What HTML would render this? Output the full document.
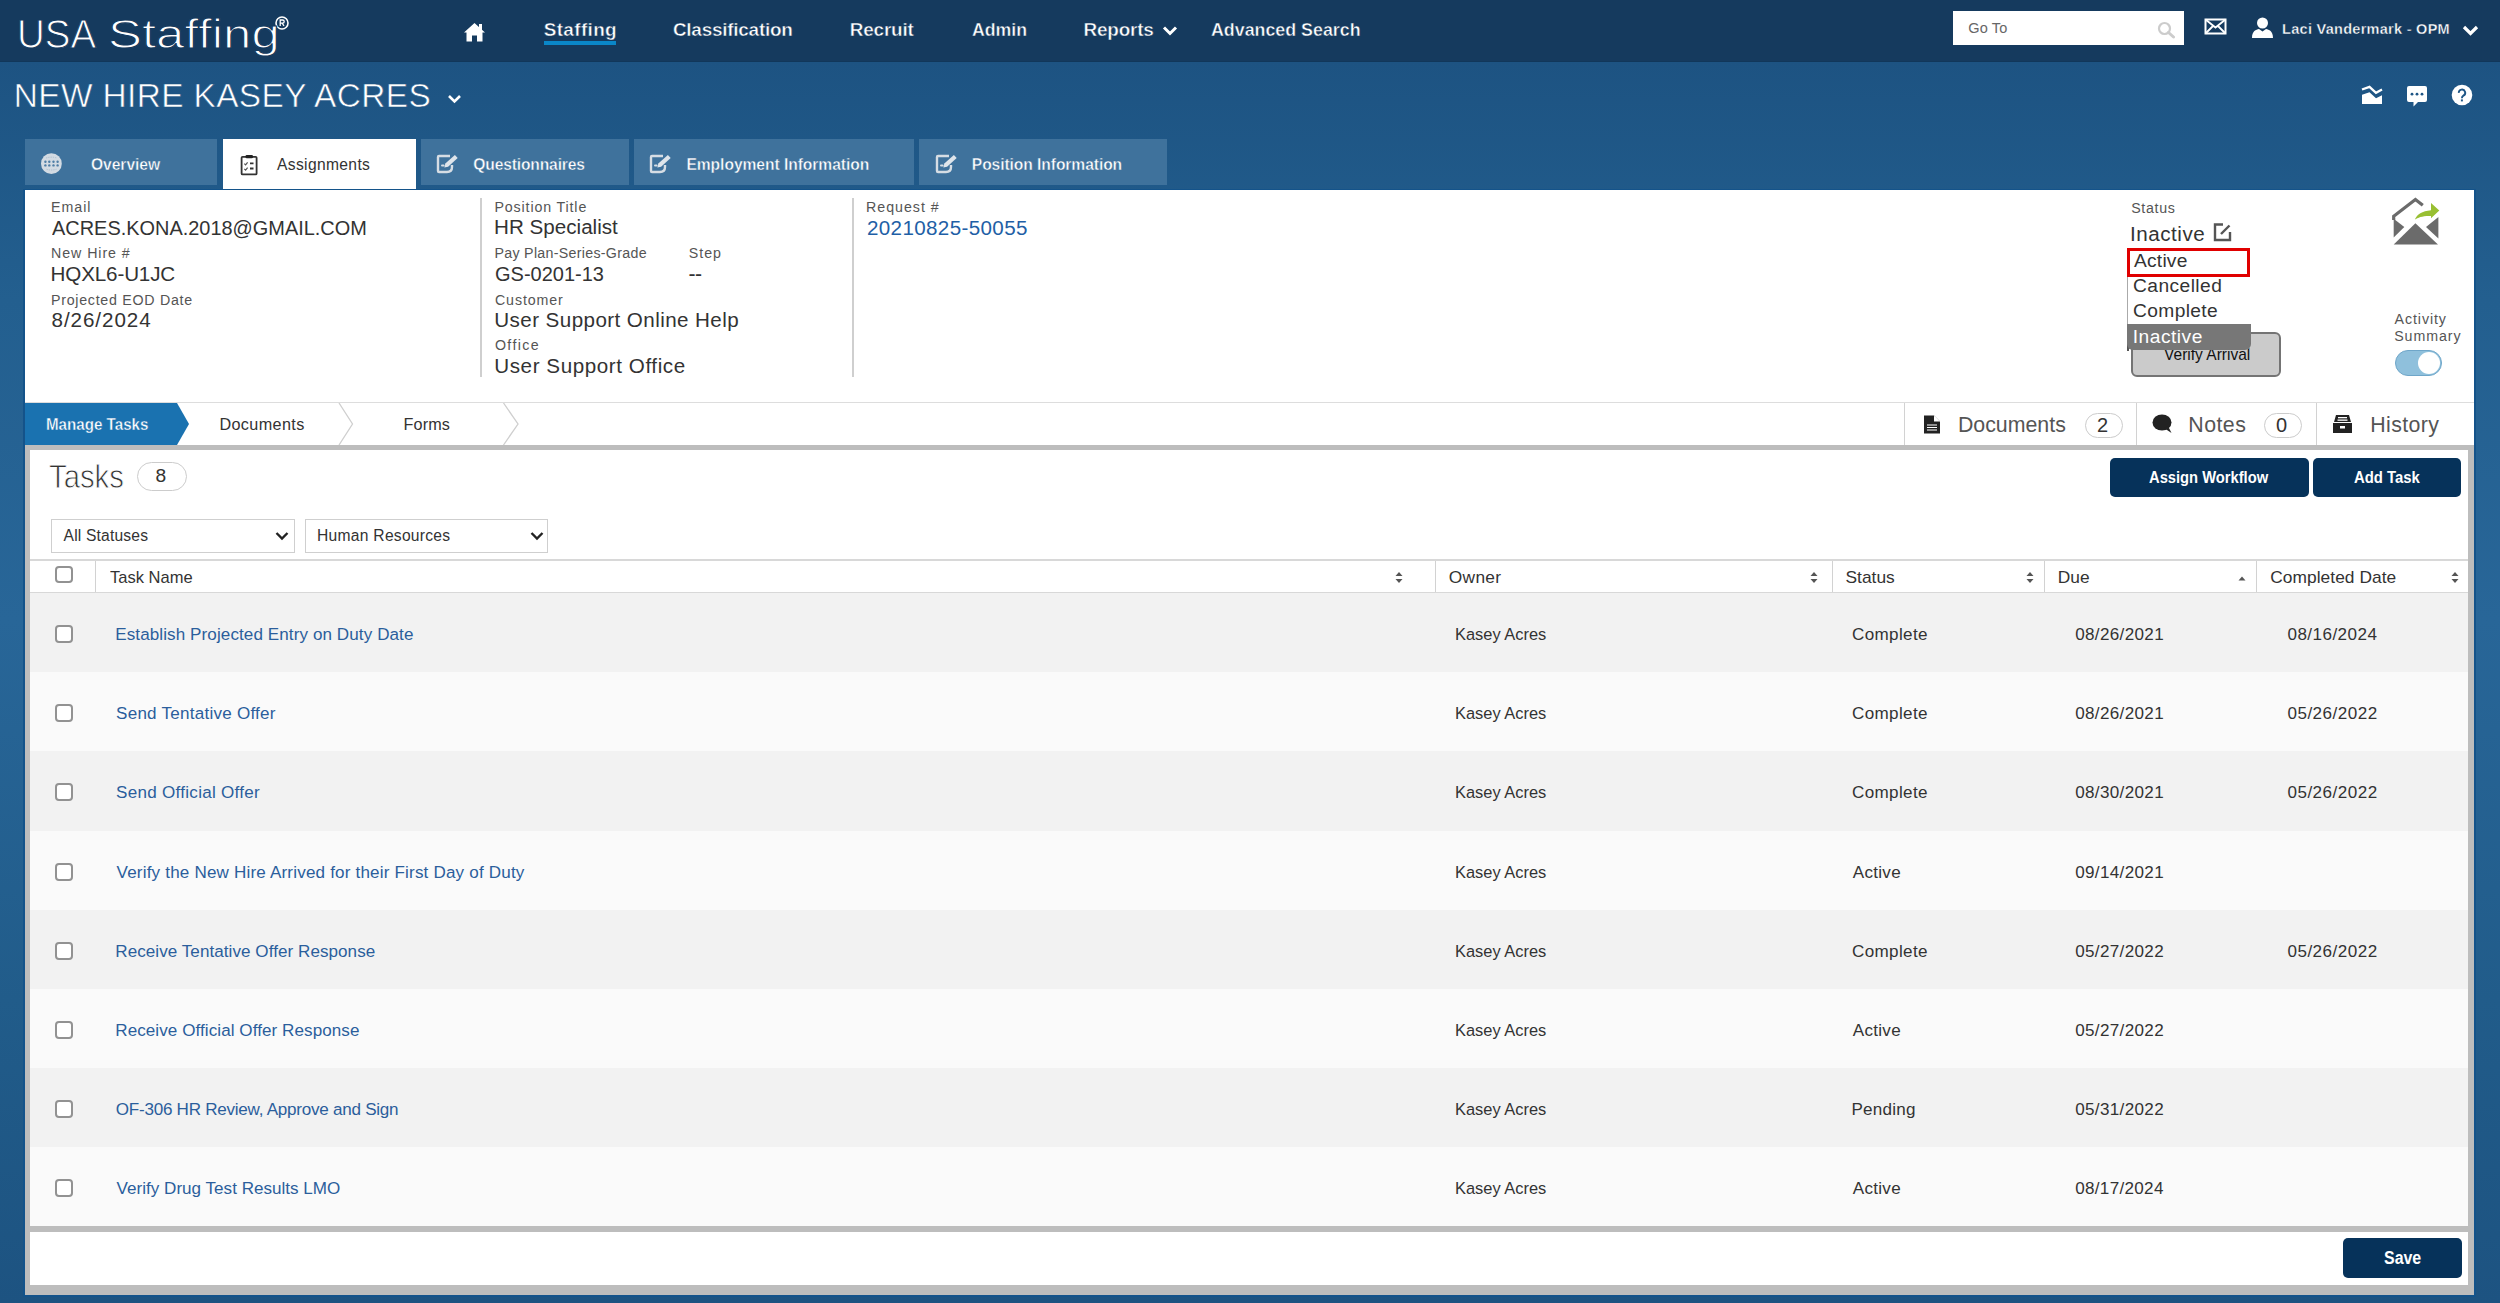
<!DOCTYPE html>
<html><head><meta charset="utf-8"><title>USA Staffing - New Hire</title>
<style>
*{box-sizing:border-box;}
html,body{margin:0;padding:0;}
body{width:2500px;height:1303px;overflow:hidden;position:relative;font-family:"Liberation Sans",sans-serif;
 background:linear-gradient(180deg,#1d5382 62px,#235f8f 300px,#286698 620px,#215c8a 1000px,#1d5381 1303px);}
.tx{position:absolute;white-space:pre;line-height:1;}
.bm{display:inline-block;width:0;height:0;vertical-align:baseline;}
.abs{position:absolute;}
#topbar{position:absolute;left:0;top:0;width:2500px;height:62px;background:#153a5e;}
.tab{position:absolute;top:139px;height:46px;background:#3f729c;}
.tab.active{background:#fff;height:51px;}
#info{position:absolute;left:25px;top:190px;width:2449px;height:212px;background:#fff;}
#crumb{position:absolute;left:25px;top:402px;width:2449px;height:43px;background:#fff;border-top:1px solid #ddd;}
#tasks{position:absolute;left:25px;top:445px;width:2449px;height:850px;background:#bdbdbd;}
#tasksin{position:absolute;left:5px;top:5px;width:2438px;height:776px;background:#fff;overflow:hidden;}
#footer{position:absolute;left:5px;top:787px;width:2438px;height:53px;background:#fff;}
.row{position:absolute;left:0;width:2438px;}
.cb{position:absolute;width:17.8px;height:17.5px;border:2px solid #929292;border-radius:4px;background:#fff;}
.btn{position:absolute;background:#06325a;border-radius:5px;}
.pill{position:absolute;border:1.5px solid #ccc;border-radius:14px;background:#fff;}
.vline{position:absolute;width:1px;background:#d2d2d2;}
.hline{position:absolute;height:1px;background:#d2d2d2;}
</style></head><body>
<div id="topbar"></div><div class="abs" style="left:0;top:61px;width:2500px;height:1px;background:#11375a"></div>
<!-- home icon -->
<svg class="abs" style="left:463px;top:22px" width="23" height="20" viewBox="0 0 23 20"><path d="M11.5 1 L1 10.5 L3.5 10.5 L3.5 19.5 L9 19.5 L9 13.5 L14 13.5 L14 19.5 L19.5 19.5 L19.5 10.5 L22 10.5 Z" fill="#fff"/><rect x="16" y="2" width="3" height="6" fill="#fff"/></svg>
<div class="abs" style="left:544px;top:41px;width:72px;height:4px;background:#0a87c9"></div>
<!-- reports chevron -->
<svg class="abs" style="left:1162px;top:25px" width="16" height="12" viewBox="0 0 16 12"><path d="M2 2.5 L8 8.5 L14 2.5" stroke="#fff" stroke-width="3" fill="none"/></svg>
<!-- registered mark -->
<svg class="abs" style="left:274px;top:15px" width="16" height="16" viewBox="0 0 16 16"><circle cx="8" cy="8" r="6" stroke="#fff" stroke-width="1.6" fill="none"/><path d="M6.2 11 V5 H8.6 A1.6 1.6 0 0 1 8.6 8.2 H6.2 M8.2 8.2 L10 11" stroke="#fff" stroke-width="1.3" fill="none"/></svg>
<!-- goto box -->
<div class="abs" style="left:1953px;top:11px;width:231px;height:34px;background:#fff"></div>
<svg class="abs" style="left:2156px;top:21px" width="22" height="18" viewBox="0 0 22 18"><circle cx="8.5" cy="7.5" r="5.5" stroke="#ccc" stroke-width="2.2" fill="none"/><path d="M12.5 11.5 L17.5 16" stroke="#ccc" stroke-width="3" stroke-linecap="round"/></svg>
<!-- mail -->
<svg class="abs" style="left:2204px;top:18px" width="24" height="18" viewBox="0 0 24 18"><rect x="1.5" y="1.5" width="20" height="14" stroke="#fff" stroke-width="2" fill="none"/><path d="M1.5 1.5 L11.5 9.5 L21.5 1.5 M1.5 15.5 L9 8 M21.5 15.5 L14 8" stroke="#fff" stroke-width="1.8" fill="none"/></svg>
<!-- user -->
<svg class="abs" style="left:2251px;top:16px" width="23" height="23" viewBox="0 0 23 23"><circle cx="11.5" cy="7" r="5.5" fill="#fff"/><path d="M1 22 C1 15 5 13.5 8 13 L11.5 15.5 L15 13 C18 13.5 22 15 22 22 Z" fill="#fff"/></svg>
<svg class="abs" style="left:2461px;top:23px" width="19" height="15" viewBox="0 0 19 15"><path d="M3 4 L9.5 10.5 L16 4" stroke="#fff" stroke-width="3.2" fill="none"/></svg>
<!-- title chevron -->
<svg class="abs" style="left:446px;top:92px" width="17" height="14" viewBox="0 0 17 14"><path d="M3 4 L8.5 9.5 L14 4" stroke="#fff" stroke-width="2.6" fill="none"/></svg>
<!-- right header icons -->
<svg class="abs" style="left:2360px;top:85px" width="24" height="21" viewBox="0 0 24 21"><path d="M2 19 V9.8 L9.5 7.2 L16 13.2 L22 10.2 V19 Z" fill="#fff"/><path d="M2 4.5 L9.5 1.8 L16 7.8 L22 4.6" stroke="#fff" stroke-width="2.3" fill="none"/></svg>
<svg class="abs" style="left:2406px;top:85px" width="22" height="23" viewBox="0 0 22 23"><path d="M3 1 H19 A2 2 0 0 1 21 3 V15 A2 2 0 0 1 19 17 H12 L7.5 21.5 V17 H3 A2 2 0 0 1 1 15 V3 A2 2 0 0 1 3 1 Z" fill="#fff"/><circle cx="6" cy="9.2" r="1.4" fill="#1f5686"/><circle cx="11" cy="9.2" r="1.4" fill="#1f5686"/><circle cx="16" cy="9.2" r="1.4" fill="#1f5686"/></svg>
<svg class="abs" style="left:2451px;top:84px" width="22" height="22" viewBox="0 0 22 22"><circle cx="11" cy="11" r="10.3" fill="#fff"/><path d="M7.8 8.9 A3.2 3.2 0 1 1 12.4 11.6 C11.2 12.3 10.9 12.8 10.9 14.3" stroke="#1f5686" stroke-width="1.9" fill="none"/><rect x="9.9" y="15.4" width="2" height="2" fill="#1f5686"/></svg>

<!-- tabs -->
<div class="tab" style="left:25px;width:192px"></div>
<div class="tab active" style="left:223px;width:193px"></div>
<div class="tab" style="left:421px;width:208px"></div>
<div class="tab" style="left:634px;width:280px"></div>
<div class="tab" style="left:919px;width:248px"></div>
<!-- globe -->
<svg class="abs" style="left:40px;top:152px" width="23" height="23" viewBox="0 0 23 23"><circle cx="11.4" cy="11.7" r="10.4" fill="#d3dbe3"/><g fill="#4f7ea6"><circle cx="5.4" cy="9.8" r="1.2"/><circle cx="9.3" cy="9.8" r="1.2"/><circle cx="13.5" cy="9.8" r="1.2"/><circle cx="17.6" cy="9.8" r="1.2"/><circle cx="5.4" cy="13.4" r="1.2"/><circle cx="9.3" cy="13.4" r="1.2"/><circle cx="13.5" cy="13.4" r="1.2"/><circle cx="17.6" cy="13.4" r="1.2"/></g><g stroke="#a9bccd" stroke-width="0.9" fill="none" stroke-dasharray="1.3 1"><path d="M6 6 Q11.4 4.3 17 6"/><path d="M6.5 17.2 Q11.4 18.8 16.5 17.2"/></g></svg>
<!-- clipboard -->
<svg class="abs" style="left:240px;top:154px" width="19" height="22" viewBox="0 0 19 22"><rect x="1.6" y="2.8" width="15" height="17.6" stroke="#333" stroke-width="1.8" fill="none" rx="1"/><rect x="5.5" y="1" width="7.5" height="3.2" fill="#222" rx="1.3"/><path d="M4.3 9.6 L5.6 10.9 L7.6 8.4 M4.3 14.8 L5.6 16.1 L7.6 13.6" stroke="#555" stroke-width="1.2" fill="none"/><path d="M10 9.3 H13.5 M10 14.5 H13.5" stroke="#333" stroke-width="1.8"/></svg>
<!-- edit icons in tabs -->
<svg class="abs" style="left:436px;top:153px" width="22" height="22" viewBox="0 0 22 22"><path d="M14 3 H3 A1 1 0 0 0 2 4 V18 A1 1 0 0 0 3 19 H11 Q16 19 16 14 V12" stroke="#d6dde4" stroke-width="2.4" fill="none"/><path d="M8.3 14.4 L9.3 10.6 L18.9 1.9 L21.7 5.1 L12.1 13.8 Z" fill="#dfe5eb"/><rect x="5" y="11.6" width="3.6" height="2" rx="1" fill="#d6dde4"/></svg>
<svg class="abs" style="left:649px;top:153px" width="22" height="22" viewBox="0 0 22 22"><path d="M14 3 H3 A1 1 0 0 0 2 4 V18 A1 1 0 0 0 3 19 H11 Q16 19 16 14 V12" stroke="#d6dde4" stroke-width="2.4" fill="none"/><path d="M8.3 14.4 L9.3 10.6 L18.9 1.9 L21.7 5.1 L12.1 13.8 Z" fill="#dfe5eb"/><rect x="5" y="11.6" width="3.6" height="2" rx="1" fill="#d6dde4"/></svg>
<svg class="abs" style="left:935px;top:153px" width="22" height="22" viewBox="0 0 22 22"><path d="M14 3 H3 A1 1 0 0 0 2 4 V18 A1 1 0 0 0 3 19 H11 Q16 19 16 14 V12" stroke="#d6dde4" stroke-width="2.4" fill="none"/><path d="M8.3 14.4 L9.3 10.6 L18.9 1.9 L21.7 5.1 L12.1 13.8 Z" fill="#dfe5eb"/><rect x="5" y="11.6" width="3.6" height="2" rx="1" fill="#d6dde4"/></svg>

<!-- info panel -->
<div class="abs" style="left:23px;top:189px;width:2453px;height:1108px;background:#14538a"></div>
<div id="info"></div>
<div class="vline" style="left:480px;top:198px;height:179px;background:#cfcfcf;width:2px"></div>
<div class="vline" style="left:852px;top:198px;height:179px;background:#cfcfcf;width:2px"></div>
<!-- status edit icon -->
<svg class="abs" style="left:2213px;top:222px" width="20" height="20" viewBox="0 0 20 20"><path d="M10 2.5 H2 V18 H17 V10" stroke="#555" stroke-width="2.4" fill="none"/><path d="M8 12 L16.5 3.5" stroke="#555" stroke-width="2.4"/></svg>
<!-- envelope icon -->
<svg class="abs" style="left:2392px;top:197px" width="50" height="50" viewBox="0 0 50 50"><path d="M1.7 23 V19.3 L23.4 2.5 L30.8 8.3" stroke="#6b6b6b" stroke-width="3.2" fill="none"/><path d="M1.7 21.7 L12.3 30 L1.7 40.6 Z" fill="#6b6b6b"/><path d="M46.4 19.9 L34 30 L46.4 41.5 Z" fill="#6b6b6b"/><path d="M1.7 47.5 L23.4 26.3 L46 47.5 Z" fill="#6b6b6b"/><path d="M22.9 22.6 C25 17.5 30 14 39 13.3 V6 L47.3 13.4 L39 21.2 V19 C31 18.6 26 20.5 22.9 22.6 Z" fill="#98bf32"/></svg>
<!-- toggle -->
<div class="abs" style="left:2395px;top:350px;width:47px;height:26px;border-radius:13px;background:#8fc0dc;border:1.5px solid #6fa6c9"></div>
<div class="abs" style="left:2418px;top:352px;width:22px;height:22px;border-radius:11px;background:#fff"></div>
<!-- verify arrival button -->
<div class="abs" style="left:2131px;top:332px;width:150px;height:45px;background:#cbcbcb;border:2px solid #747474;border-radius:6px"></div>
<!-- dropdown list -->
<div class="abs" style="left:2127px;top:277px;width:124px;height:48px;background:#fff;border-left:1px solid #aaa;z-index:4"></div>
<div class="abs" style="left:2127px;top:324px;width:2px;height:27px;background:#555;z-index:4"></div>
<div class="abs" style="left:2127px;top:324px;width:124px;height:26px;background:#777;border-radius:0 0 6px 6px;z-index:4"></div>
<div class="abs" style="left:2127px;top:248px;width:123px;height:29px;border:3px solid #e00000;background:#fff;z-index:4"></div>

<!-- breadcrumb -->
<div id="crumb"></div>
<svg class="abs" style="left:25px;top:403px" width="500" height="42" viewBox="0 0 500 42"><path d="M0 0 H152 L164 21 L152 42 H0 Z" fill="#1a72b0"/><path d="M314 0 L327.5 21 L314 42" stroke="#cfcfcf" stroke-width="1.3" fill="none"/><path d="M478.5 0 L493 21 L478.5 42" stroke="#cfcfcf" stroke-width="1.3" fill="none"/></svg>
<div class="vline" style="left:1904px;top:403px;height:42px"></div>
<div class="vline" style="left:2136px;top:403px;height:42px"></div>
<div class="vline" style="left:2316px;top:403px;height:42px"></div>
<!-- doc icon -->
<svg class="abs" style="left:1923px;top:415px" width="18" height="19" viewBox="0 0 18 19"><path d="M1 0.5 H11 L17 6.5 V18.5 H1 Z" fill="#222"/><path d="M11 0.5 V6.5 H17" fill="#fff"/><path d="M11.8 1.5 L16 5.8 H11.8 Z" fill="#fff"/><path d="M4 10 H14 M4 12.5 H14 M4 15 H14" stroke="#fff" stroke-width="1.2"/></svg>
<svg class="abs" style="left:2152px;top:413px" width="21" height="21" viewBox="0 0 21 21"><ellipse cx="10" cy="9.5" rx="9.5" ry="8" fill="#222"/><path d="M12 15 L19.5 20 L16 13 Z" fill="#222"/></svg>
<svg class="abs" style="left:2332px;top:414px" width="21" height="20" viewBox="0 0 21 20"><path d="M4 1 H17 L19 8 H2 Z" fill="#222"/><rect x="6" y="3" width="9" height="1.3" fill="#fff"/><rect x="5.5" y="5.5" width="10" height="1.3" fill="#fff"/><rect x="1" y="9" width="19" height="10" fill="#222"/><rect x="8" y="12" width="5" height="2.5" fill="#fff"/></svg>
<div class="pill" style="left:2085px;top:413px;width:38px;height:25px"></div>
<div class="pill" style="left:2264px;top:413px;width:38px;height:25px"></div>
<div class="tx" style="left:2097px;top:413px;font-size:20px;line-height:25px;color:#333">2</div>
<div class="tx" style="left:2276px;top:413px;font-size:20px;line-height:25px;color:#333">0</div>

<!-- tasks panel -->
<div id="tasks">
 <div id="tasksin">
  <div class="pill" style="left:107px;top:12px;width:50px;height:29px;border-radius:15px"></div>
  <div class="abs" style="left:20.5px;top:68.5px;width:244px;height:34px;border:1.5px solid #cfcfcf"></div>
  <div class="abs" style="left:275px;top:68.5px;width:243px;height:34px;border:1.5px solid #cfcfcf"></div>
  <svg class="abs" style="left:245px;top:81px" width="14" height="11" viewBox="0 0 14 11"><path d="M1.5 2 L7 7.5 L12.5 2" stroke="#222" stroke-width="2.4" fill="none"/></svg>
  <svg class="abs" style="left:500px;top:81px" width="14" height="11" viewBox="0 0 14 11"><path d="M1.5 2 L7 7.5 L12.5 2" stroke="#222" stroke-width="2.4" fill="none"/></svg>
  <div class="btn" style="left:2080px;top:8px;width:199px;height:39px"></div>
  <div class="btn" style="left:2283px;top:8px;width:148px;height:39px"></div>
  <!-- table header -->
  <div class="hline" style="left:0;top:109px;width:2438px;height:2px;background:#d8d8d8"></div>
  <div class="hline" style="left:0;top:142px;width:2438px;height:2px;background:#d8d8d8"></div>
  <div class="vline" style="left:65px;top:111px;height:31px"></div>
  <div class="vline" style="left:1405px;top:111px;height:31px"></div>
  <div class="vline" style="left:1802px;top:111px;height:31px"></div>
  <div class="vline" style="left:2014px;top:111px;height:31px"></div>
  <div class="vline" style="left:2226px;top:111px;height:31px"></div>
  <div class="cb" style="left:25.2px;top:115.5px"></div>
  <div class="row" style="top:143px;height:79px;background:#f2f2f2"></div>
<div class="cb" style="left:25.2px;top:175px"></div>
<div class="row" style="top:222px;height:79px;background:#fafafa"></div>
<div class="cb" style="left:25.2px;top:254px"></div>
<div class="row" style="top:301px;height:80px;background:#f2f2f2"></div>
<div class="cb" style="left:25.2px;top:333px"></div>
<div class="row" style="top:381px;height:79px;background:#fafafa"></div>
<div class="cb" style="left:25.2px;top:413px"></div>
<div class="row" style="top:460px;height:79px;background:#f2f2f2"></div>
<div class="cb" style="left:25.2px;top:492px"></div>
<div class="row" style="top:539px;height:79px;background:#fafafa"></div>
<div class="cb" style="left:25.2px;top:571px"></div>
<div class="row" style="top:618px;height:79px;background:#f2f2f2"></div>
<div class="cb" style="left:25.2px;top:650px"></div>
<div class="row" style="top:697px;height:79px;background:#fafafa"></div>
<div class="cb" style="left:25.2px;top:729px"></div>
 </div>
 <div id="footer">
  <div class="btn" style="left:2313px;top:6px;width:119px;height:40px"></div>
 </div>
</div>
<svg class="abs" style="left:1395px;top:571px" width="8" height="13" viewBox="0 0 8 13"><path d="M0.5 5 L4 1 L7.5 5 Z M0.5 8 L4 12 L7.5 8 Z" fill="#555"/></svg>
<svg class="abs" style="left:1810px;top:571px" width="8" height="13" viewBox="0 0 8 13"><path d="M0.5 5 L4 1 L7.5 5 Z M0.5 8 L4 12 L7.5 8 Z" fill="#555"/></svg>
<svg class="abs" style="left:2026px;top:571px" width="8" height="13" viewBox="0 0 8 13"><path d="M0.5 5 L4 1 L7.5 5 Z M0.5 8 L4 12 L7.5 8 Z" fill="#555"/></svg>
<svg class="abs" style="left:2451px;top:571px" width="8" height="13" viewBox="0 0 8 13"><path d="M0.5 5 L4 1 L7.5 5 Z M0.5 8 L4 12 L7.5 8 Z" fill="#555"/></svg>
<svg class="abs" style="left:2238px;top:575px" width="8" height="7" viewBox="0 0 8 7"><path d="M0.5 5.5 L4 1.5 L7.5 5.5 Z" fill="#555"/></svg>
<div class="tx" id="t0" style="left:543.70px;top:21.00px;font-size:18.92px;letter-spacing:0.373px;font-weight:bold;color:#fff;-webkit-text-stroke:0.45px #153a5e">Staffing</div>
<div class="tx" id="t1" style="left:672.91px;top:21.00px;font-size:18.92px;letter-spacing:-0.229px;font-weight:bold;color:#fff;-webkit-text-stroke:0.45px #153a5e">Classification</div>
<div class="tx" id="t2" style="left:849.82px;top:21.00px;font-size:18.92px;letter-spacing:-0.199px;font-weight:bold;color:#fff;-webkit-text-stroke:0.45px #153a5e">Recruit</div>
<div class="tx" id="t3" style="left:971.72px;top:21.00px;font-size:18.92px;letter-spacing:0.000px;font-weight:bold;color:#fff;-webkit-text-stroke:0.45px #153a5e;transform:scaleX(0.9370);transform-origin:0 0;transform:scaleX(0.9370);transform-origin:0 0">Admin</div>
<div class="tx" id="t4" style="left:1083.62px;top:21.00px;font-size:18.92px;letter-spacing:-0.220px;font-weight:bold;color:#fff;-webkit-text-stroke:0.45px #153a5e">Reports</div>
<div class="tx" id="t5" style="left:1211.42px;top:21.00px;font-size:18.92px;letter-spacing:0.000px;font-weight:bold;color:#fff;-webkit-text-stroke:0.45px #153a5e;transform:scaleX(0.9426);transform-origin:0 0;transform:scaleX(0.9426);transform-origin:0 0">Advanced Search</div>
<div class="tx" id="t6" style="left:16.60px;top:13.50px;font-size:41.24px;letter-spacing:0.000px;font-weight:normal;color:#fff;-webkit-text-stroke:1px #153a5e;transform:scaleX(0.9329);transform-origin:0 0;transform:scaleX(0.9329);transform-origin:0 0">USA</div>
<div class="tx" id="t7" style="left:108.41px;top:13.50px;font-size:41.24px;letter-spacing:0.000px;font-weight:normal;color:#fff;-webkit-text-stroke:1.1px #153a5e;transform:scaleX(1.2346);transform-origin:0 0;transform:scaleX(1.2346);transform-origin:0 0">Staffing</div>
<div class="tx" id="t8" style="left:1968.32px;top:21.00px;font-size:14.51px;letter-spacing:0.141px;font-weight:normal;color:#666;">Go To</div>
<div class="tx" id="t9" style="left:2282.09px;top:22.00px;font-size:14.51px;letter-spacing:0.280px;font-weight:bold;color:#fff;-webkit-text-stroke:0.35px #153a5e">Laci Vandermark - OPM</div>
<div class="tx" id="t10" style="left:13.69px;top:78.50px;font-size:33.42px;letter-spacing:0.391px;font-weight:normal;color:#fff;-webkit-text-stroke:0.6px #1f5686">NEW HIRE KASEY ACRES</div>
<div class="tx" id="t11" style="left:90.91px;top:157.30px;font-size:15.64px;letter-spacing:-0.034px;font-weight:bold;color:#fff;-webkit-text-stroke:0.4px #3f729c">Overview</div>
<div class="tx" id="t12" style="left:277.00px;top:157.30px;font-size:15.64px;letter-spacing:0.343px;font-weight:normal;color:#333;">Assignments</div>
<div class="tx" id="t13" style="left:473.31px;top:157.30px;font-size:15.64px;letter-spacing:-0.159px;font-weight:bold;color:#fff;-webkit-text-stroke:0.4px #3f729c">Questionnaires</div>
<div class="tx" id="t14" style="left:686.42px;top:157.30px;font-size:15.64px;letter-spacing:-0.054px;font-weight:bold;color:#fff;-webkit-text-stroke:0.4px #3f729c">Employment Information</div>
<div class="tx" id="t15" style="left:971.82px;top:157.30px;font-size:15.64px;letter-spacing:-0.082px;font-weight:bold;color:#fff;-webkit-text-stroke:0.4px #3f729c">Position Information</div>
<div class="tx" id="t16" style="left:51.09px;top:200.40px;font-size:14.22px;letter-spacing:0.972px;font-weight:normal;color:#555;">Email</div>
<div class="tx" id="t17" style="left:52.20px;top:217.70px;font-size:20.62px;letter-spacing:0.000px;font-weight:normal;color:#333;;transform:scaleX(0.9671);transform-origin:0 0;transform:scaleX(0.9671);transform-origin:0 0">ACRES.KONA.2018@GMAIL.COM</div>
<div class="tx" id="t18" style="left:51.09px;top:246.20px;font-size:14.22px;letter-spacing:0.920px;font-weight:normal;color:#555;">New Hire #</div>
<div class="tx" id="t19" style="left:50.59px;top:264.00px;font-size:20.62px;letter-spacing:-0.148px;font-weight:normal;color:#333;">HQXL6-U1JC</div>
<div class="tx" id="t20" style="left:51.09px;top:292.50px;font-size:14.22px;letter-spacing:0.720px;font-weight:normal;color:#555;">Projected EOD Date</div>
<div class="tx" id="t21" style="left:51.56px;top:310.00px;font-size:20.62px;letter-spacing:0.927px;font-weight:normal;color:#333;">8/26/2024</div>
<div class="tx" id="t22" style="left:494.49px;top:200.40px;font-size:14.22px;letter-spacing:0.861px;font-weight:normal;color:#555;">Position Title</div>
<div class="tx" id="t23" style="left:493.99px;top:217.20px;font-size:20.62px;letter-spacing:0.014px;font-weight:normal;color:#333;">HR Specialist</div>
<div class="tx" id="t24" style="left:494.49px;top:246.20px;font-size:14.22px;letter-spacing:0.293px;font-weight:normal;color:#555;">Pay Plan-Series-Grade</div>
<div class="tx" id="t25" style="left:688.76px;top:246.20px;font-size:14.22px;letter-spacing:0.988px;font-weight:normal;color:#555;">Step</div>
<div class="tx" id="t26" style="left:494.66px;top:263.60px;font-size:20.62px;letter-spacing:0.000px;font-weight:normal;color:#333;;transform:scaleX(0.9698);transform-origin:0 0;transform:scaleX(0.9698);transform-origin:0 0">GS-0201-13</div>
<div class="tx" id="t27" style="left:494.93px;top:292.60px;font-size:14.22px;letter-spacing:0.899px;font-weight:normal;color:#555;">Customer</div>
<div class="tx" id="t28" style="left:494.31px;top:310.00px;font-size:20.62px;letter-spacing:0.415px;font-weight:normal;color:#333;">User Support Online Help</div>
<div class="tx" id="t29" style="left:494.93px;top:338.20px;font-size:14.22px;letter-spacing:1.351px;font-weight:normal;color:#555;">Office</div>
<div class="tx" id="t30" style="left:494.31px;top:355.60px;font-size:20.62px;letter-spacing:0.567px;font-weight:normal;color:#333;">User Support Office</div>
<div class="tx" id="t31" style="left:866.09px;top:200.30px;font-size:14.22px;letter-spacing:0.973px;font-weight:normal;color:#555;">Request #</div>
<div class="tx" id="t32" style="left:866.93px;top:217.60px;font-size:20.62px;letter-spacing:0.357px;font-weight:normal;color:#1f5fa6;">20210825-50055</div>
<div class="tx" id="t33" style="left:2131.16px;top:200.50px;font-size:14.22px;letter-spacing:0.694px;font-weight:normal;color:#555;">Status</div>
<div class="tx" id="t34" style="left:2129.99px;top:224.00px;font-size:20.62px;letter-spacing:0.540px;font-weight:normal;color:#333;">Inactive</div>
<div class="tx" id="t35" style="left:2163.50px;top:345.50px;font-size:17.00px;letter-spacing:0.000px;font-weight:normal;color:#111;;transform:scaleX(0.9132);transform-origin:0 0;transform:scaleX(0.9132);transform-origin:0 0">Verify Arrival</div>
<div class="tx" id="t36" style="left:688.54px;top:262.60px;font-size:21.20px;letter-spacing:-0.691px;font-weight:normal;color:#333;">--</div>
<div class="tx" id="t37" style="left:2134.00px;top:251.20px;font-size:19.20px;letter-spacing:0.219px;font-weight:normal;color:#333;z-index:5">Active</div>
<div class="tx" id="t38" style="left:2133.10px;top:276.00px;font-size:19.20px;letter-spacing:0.424px;font-weight:normal;color:#333;z-index:5">Cancelled</div>
<div class="tx" id="t39" style="left:2133.10px;top:300.80px;font-size:19.20px;letter-spacing:0.358px;font-weight:normal;color:#333;z-index:5">Complete</div>
<div class="tx" id="t40" style="left:2132.80px;top:326.50px;font-size:19.20px;letter-spacing:0.487px;font-weight:normal;color:#fff;z-index:5">Inactive</div>
<div class="tx" id="t41" style="left:2394.60px;top:312.30px;font-size:14.22px;letter-spacing:0.908px;font-weight:normal;color:#555;">Activity</div>
<div class="tx" id="t42" style="left:2394.16px;top:329.20px;font-size:14.22px;letter-spacing:0.933px;font-weight:normal;color:#555;">Summary</div>
<div class="tx" id="t43" style="left:46.05px;top:416.40px;font-size:16.21px;letter-spacing:0.000px;font-weight:bold;color:#fff;-webkit-text-stroke:0.4px #1a72b0;transform:scaleX(0.9355);transform-origin:0 0;transform:scaleX(0.9355);transform-origin:0 0">Manage Tasks</div>
<div class="tx" id="t44" style="left:219.43px;top:416.40px;font-size:16.21px;letter-spacing:0.372px;font-weight:normal;color:#333;">Documents</div>
<div class="tx" id="t45" style="left:403.53px;top:416.40px;font-size:16.21px;letter-spacing:0.135px;font-weight:normal;color:#333;">Forms</div>
<div class="tx" id="t46" style="left:1957.93px;top:414.50px;font-size:21.33px;letter-spacing:0.005px;font-weight:normal;color:#555;">Documents</div>
<div class="tx" id="t47" style="left:2188.33px;top:414.50px;font-size:21.33px;letter-spacing:0.451px;font-weight:normal;color:#555;">Notes</div>
<div class="tx" id="t48" style="left:2370.23px;top:414.50px;font-size:21.33px;letter-spacing:0.399px;font-weight:normal;color:#555;">History</div>
<div class="tx" id="t49" style="left:49.04px;top:458.90px;font-size:34.13px;letter-spacing:0.000px;font-weight:normal;color:#333;-webkit-text-stroke:0.9px #fff;transform:scaleX(0.8581);transform-origin:0 0;transform:scaleX(0.8581);transform-origin:0 0">Tasks</div>
<div class="tx" id="t50" style="left:63.60px;top:527.70px;font-size:15.64px;letter-spacing:0.171px;font-weight:normal;color:#333;">All Statuses</div>
<div class="tx" id="t51" style="left:317.08px;top:527.70px;font-size:15.64px;letter-spacing:0.261px;font-weight:normal;color:#333;">Human Resources</div>
<div class="tx" id="t52" style="left:110.04px;top:569.00px;font-size:17.35px;letter-spacing:0.000px;font-weight:normal;color:#333;;transform:scaleX(0.9521);transform-origin:0 0;transform:scaleX(0.9521);transform-origin:0 0">Task Name</div>
<div class="tx" id="t53" style="left:1448.79px;top:569.00px;font-size:17.35px;letter-spacing:0.298px;font-weight:normal;color:#333;">Owner</div>
<div class="tx" id="t54" style="left:1845.46px;top:569.00px;font-size:17.35px;letter-spacing:0.019px;font-weight:normal;color:#333;">Status</div>
<div class="tx" id="t55" style="left:2057.64px;top:569.00px;font-size:17.35px;letter-spacing:0.114px;font-weight:normal;color:#333;">Due</div>
<div class="tx" id="t56" style="left:2270.19px;top:569.00px;font-size:17.35px;letter-spacing:0.057px;font-weight:normal;color:#333;">Completed Date</div>
<div class="tx" id="t57" style="left:155.40px;top:466.40px;font-size:19.20px;letter-spacing:0.000px;font-weight:normal;color:#333;">8</div>
<div class="tx" id="t58" style="left:2149.27px;top:469.80px;font-size:16.92px;letter-spacing:0.000px;font-weight:bold;color:#fff;;transform:scaleX(0.8708);transform-origin:0 0;transform:scaleX(0.8708);transform-origin:0 0">Assign Workflow</div>
<div class="tx" id="t59" style="left:2354.17px;top:469.80px;font-size:16.92px;letter-spacing:0.000px;font-weight:bold;color:#fff;;transform:scaleX(0.8801);transform-origin:0 0;transform:scaleX(0.8801);transform-origin:0 0">Add Task</div>
<div class="tx" id="t60" style="left:2384.15px;top:1250.00px;font-size:17.64px;letter-spacing:0.000px;font-weight:bold;color:#fff;;transform:scaleX(0.9043);transform-origin:0 0;transform:scaleX(0.9043);transform-origin:0 0">Save</div>
<div class="tx" id="t61" style="left:115.27px;top:625.50px;font-size:17.07px;letter-spacing:0.087px;font-weight:normal;color:#2b5e9c;">Establish Projected Entry on Duty Date</div>
<div class="tx" id="t62" style="left:1454.72px;top:625.50px;font-size:17.07px;letter-spacing:0.000px;font-weight:normal;color:#333;;transform:scaleX(0.9624);transform-origin:0 0;transform:scaleX(0.9624);transform-origin:0 0">Kasey Acres</div>
<div class="tx" id="t63" style="left:1852.00px;top:625.50px;font-size:17.07px;letter-spacing:0.350px;font-weight:normal;color:#333;">Complete</div>
<div class="tx" id="t64" style="left:2075.17px;top:625.50px;font-size:17.07px;letter-spacing:0.345px;font-weight:normal;color:#333;">08/26/2021</div>
<div class="tx" id="t65" style="left:2287.47px;top:625.50px;font-size:17.07px;letter-spacing:0.449px;font-weight:normal;color:#333;">08/16/2024</div>
<div class="tx" id="t66" style="left:116.07px;top:704.50px;font-size:17.07px;letter-spacing:0.234px;font-weight:normal;color:#2b5e9c;">Send Tentative Offer</div>
<div class="tx" id="t67" style="left:1454.72px;top:704.50px;font-size:17.07px;letter-spacing:0.000px;font-weight:normal;color:#333;;transform:scaleX(0.9624);transform-origin:0 0;transform:scaleX(0.9624);transform-origin:0 0">Kasey Acres</div>
<div class="tx" id="t68" style="left:1852.00px;top:704.50px;font-size:17.07px;letter-spacing:0.350px;font-weight:normal;color:#333;">Complete</div>
<div class="tx" id="t69" style="left:2075.17px;top:704.50px;font-size:17.07px;letter-spacing:0.345px;font-weight:normal;color:#333;">08/26/2021</div>
<div class="tx" id="t70" style="left:2287.47px;top:704.50px;font-size:17.07px;letter-spacing:0.479px;font-weight:normal;color:#333;">05/26/2022</div>
<div class="tx" id="t71" style="left:116.07px;top:783.50px;font-size:17.07px;letter-spacing:0.272px;font-weight:normal;color:#2b5e9c;">Send Official Offer</div>
<div class="tx" id="t72" style="left:1454.72px;top:783.50px;font-size:17.07px;letter-spacing:0.000px;font-weight:normal;color:#333;;transform:scaleX(0.9624);transform-origin:0 0;transform:scaleX(0.9624);transform-origin:0 0">Kasey Acres</div>
<div class="tx" id="t73" style="left:1852.00px;top:783.50px;font-size:17.07px;letter-spacing:0.350px;font-weight:normal;color:#333;">Complete</div>
<div class="tx" id="t74" style="left:2075.17px;top:783.50px;font-size:17.07px;letter-spacing:0.345px;font-weight:normal;color:#333;">08/30/2021</div>
<div class="tx" id="t75" style="left:2287.47px;top:783.50px;font-size:17.07px;letter-spacing:0.479px;font-weight:normal;color:#333;">05/26/2022</div>
<div class="tx" id="t76" style="left:116.60px;top:863.50px;font-size:17.07px;letter-spacing:0.176px;font-weight:normal;color:#2b5e9c;">Verify the New Hire Arrived for their First Day of Duty</div>
<div class="tx" id="t77" style="left:1454.72px;top:863.50px;font-size:17.07px;letter-spacing:0.000px;font-weight:normal;color:#333;;transform:scaleX(0.9624);transform-origin:0 0;transform:scaleX(0.9624);transform-origin:0 0">Kasey Acres</div>
<div class="tx" id="t78" style="left:1852.80px;top:863.50px;font-size:17.07px;letter-spacing:0.283px;font-weight:normal;color:#333;">Active</div>
<div class="tx" id="t79" style="left:2075.17px;top:863.50px;font-size:17.07px;letter-spacing:0.345px;font-weight:normal;color:#333;">09/14/2021</div>
<div class="tx" id="t80" style="left:115.27px;top:942.50px;font-size:17.07px;letter-spacing:0.053px;font-weight:normal;color:#2b5e9c;">Receive Tentative Offer Response</div>
<div class="tx" id="t81" style="left:1454.72px;top:942.50px;font-size:17.07px;letter-spacing:0.000px;font-weight:normal;color:#333;;transform:scaleX(0.9624);transform-origin:0 0;transform:scaleX(0.9624);transform-origin:0 0">Kasey Acres</div>
<div class="tx" id="t82" style="left:1852.00px;top:942.50px;font-size:17.07px;letter-spacing:0.350px;font-weight:normal;color:#333;">Complete</div>
<div class="tx" id="t83" style="left:2075.17px;top:942.50px;font-size:17.07px;letter-spacing:0.345px;font-weight:normal;color:#333;">05/27/2022</div>
<div class="tx" id="t84" style="left:2287.47px;top:942.50px;font-size:17.07px;letter-spacing:0.479px;font-weight:normal;color:#333;">05/26/2022</div>
<div class="tx" id="t85" style="left:115.27px;top:1021.50px;font-size:17.07px;letter-spacing:0.067px;font-weight:normal;color:#2b5e9c;">Receive Official Offer Response</div>
<div class="tx" id="t86" style="left:1454.72px;top:1021.50px;font-size:17.07px;letter-spacing:0.000px;font-weight:normal;color:#333;;transform:scaleX(0.9624);transform-origin:0 0;transform:scaleX(0.9624);transform-origin:0 0">Kasey Acres</div>
<div class="tx" id="t87" style="left:1852.80px;top:1021.50px;font-size:17.07px;letter-spacing:0.283px;font-weight:normal;color:#333;">Active</div>
<div class="tx" id="t88" style="left:2075.17px;top:1021.50px;font-size:17.07px;letter-spacing:0.345px;font-weight:normal;color:#333;">05/27/2022</div>
<div class="tx" id="t89" style="left:115.80px;top:1100.50px;font-size:17.07px;letter-spacing:-0.255px;font-weight:normal;color:#2b5e9c;">OF-306 HR Review, Approve and Sign</div>
<div class="tx" id="t90" style="left:1454.72px;top:1100.50px;font-size:17.07px;letter-spacing:0.000px;font-weight:normal;color:#333;;transform:scaleX(0.9624);transform-origin:0 0;transform:scaleX(0.9624);transform-origin:0 0">Kasey Acres</div>
<div class="tx" id="t91" style="left:1851.47px;top:1100.50px;font-size:17.07px;letter-spacing:0.226px;font-weight:normal;color:#333;">Pending</div>
<div class="tx" id="t92" style="left:2075.17px;top:1100.50px;font-size:17.07px;letter-spacing:0.345px;font-weight:normal;color:#333;">05/31/2022</div>
<div class="tx" id="t93" style="left:116.60px;top:1179.50px;font-size:17.07px;letter-spacing:0.011px;font-weight:normal;color:#2b5e9c;">Verify Drug Test Results LMO</div>
<div class="tx" id="t94" style="left:1454.72px;top:1179.50px;font-size:17.07px;letter-spacing:0.000px;font-weight:normal;color:#333;;transform:scaleX(0.9624);transform-origin:0 0;transform:scaleX(0.9624);transform-origin:0 0">Kasey Acres</div>
<div class="tx" id="t95" style="left:1852.80px;top:1179.50px;font-size:17.07px;letter-spacing:0.283px;font-weight:normal;color:#333;">Active</div>
<div class="tx" id="t96" style="left:2075.17px;top:1179.50px;font-size:17.07px;letter-spacing:0.316px;font-weight:normal;color:#333;">08/17/2024</div>
</body></html>
